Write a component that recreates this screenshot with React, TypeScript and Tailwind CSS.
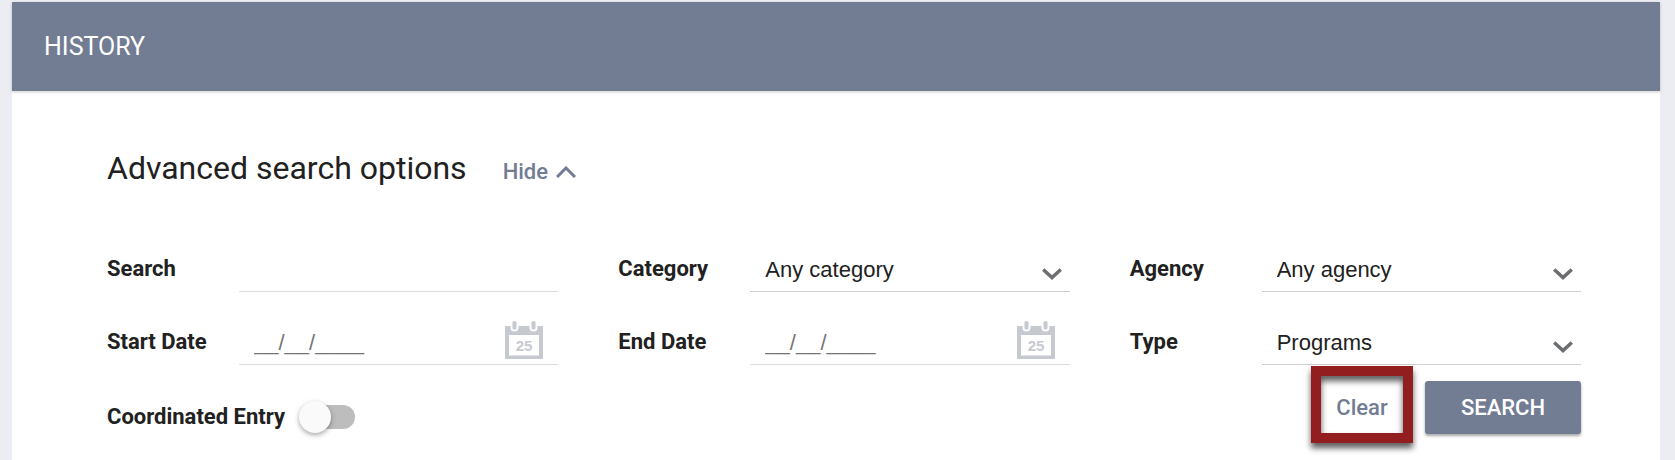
import { useState } from "react";
import type { ReactNode } from "react";

const ACCENT = "#727c93";

const inputClass =
  "h-11 w-full rounded-none border-b bg-transparent px-[15px] text-[22px] leading-7 text-[#212121] outline-none placeholder:text-[#757575] placeholder:opacity-100";

function Field({ id, label, children }: { id: string; label: string; children: ReactNode }) {
  return (
    <div className="flex">
      <label htmlFor={id} className="w-[132px] shrink-0 pt-[7px] font-[Roboto,sans-serif] text-[22px] leading-7 font-bold">
        {label}
      </label>
      <div className="relative min-w-0 flex-1">{children}</div>
    </div>
  );
}

function SelectField({ id, label, options }: { id: string; label: string; options: string[] }) {
  return (
    <Field id={id} label={label}>
      <select id={id} className={`${inputClass} appearance-none border-[#cfcfcf] pr-12`}>
        {options.map((option) => (
          <option key={option}>{option}</option>
        ))}
      </select>
      <svg className="pointer-events-none absolute top-5 right-2 h-3 w-5" viewBox="0 0 20 12" fill="none" stroke="#6c6e73" strokeWidth="3.4">
        <path d="M1.2 1.4 10 9.6 18.8 1.4" />
      </svg>
    </Field>
  );
}

function CalendarIcon() {
  return (
    <svg viewBox="0 0 38 38" className="h-[38px] w-[38px]" aria-hidden="true">
      <path fill="#c6c9d0" fillRule="evenodd" d="M0 5H38V38H0ZM4 14V34.5H34V14Z" />
      <rect x="5.5" y="-3" width="8" height="13.5" rx="4" fill="#fff" />
      <rect x="24.5" y="-3" width="8" height="13.5" rx="4" fill="#fff" />
      <rect x="7.5" y="0" width="4" height="8.5" rx="1.6" fill="#c6c9d0" />
      <rect x="26.5" y="0" width="4" height="8.5" rx="1.6" fill="#c6c9d0" />
      <text x="19" y="30" textAnchor="middle" fontSize="15" fontWeight="700" fontFamily="Liberation Sans, sans-serif" fill="#c6c9d0">
        25
      </text>
    </svg>
  );
}

function DateField({ id, label }: { id: string; label: string }) {
  return (
    <Field id={id} label={label}>
      <input id={id} type="text" placeholder="__/__/____" className={`${inputClass} border-[#dcdcdc] pr-16`} />
      <button type="button" aria-label={`Pick ${label.toLowerCase()}`} className="absolute top-0 right-[15px]">
        <CalendarIcon />
      </button>
    </Field>
  );
}

export default function App() {
  const [open, setOpen] = useState(true);
  const [coordinated, setCoordinated] = useState(false);

  return (
    <div className="flex min-h-screen flex-col bg-[#ecedf2] pt-0.5 pr-[15px] pl-3 font-['Liberation_Sans',Arial,sans-serif] text-[#212121]">
      <header className="z-10 bg-[#727c93] px-8 py-7 shadow-[0_1px_3px_rgba(0,0,0,0.2)]">
        <h1 className="font-[Roboto,sans-serif] text-[25px] leading-[33px] text-white">HISTORY</h1>
      </header>

      <main className="flex-1 bg-white pt-[57px] pr-[79px] pb-4 pl-[95px]">
        <div className="flex items-baseline gap-9 font-[Roboto,sans-serif]">
          <h2 className="text-[32px] leading-10">Advanced search options</h2>
          <button type="button" aria-expanded={open} onClick={() => setOpen(!open)} className="flex items-center gap-2 text-[22px] leading-7 font-medium text-[#727c93]">
            {open ? "Hide" : "Show"}
            <svg className={open ? "h-3 w-5" : "h-3 w-5 rotate-180"} viewBox="0 0 20 12" fill="none" stroke={ACCENT} strokeWidth="3">
              <path d="M1 11 10 2 19 11" />
            </svg>
          </button>
        </div>

        {open && (
          <form onSubmit={(event) => event.preventDefault()} onReset={() => setCoordinated(false)} className="mt-[60px]">
            <div className="grid grid-cols-3 gap-x-[60px] gap-y-[29px]">
              <Field id="search" label="Search">
                <input id="search" type="text" className={`${inputClass} border-[#dcdcdc]`} />
              </Field>
              <SelectField id="category" label="Category" options={["Any category"]} />
              <SelectField id="agency" label="Agency" options={["Any agency"]} />
              <DateField id="start-date" label="Start Date" />
              <DateField id="end-date" label="End Date" />
              <SelectField id="type" label="Type" options={["Programs", "Services"]} />
            </div>

            <div className="mt-4 flex items-start justify-between font-[Roboto,sans-serif]">
              <label className="flex items-center gap-3.5 pt-5 text-[22px] leading-8 font-bold">
                Coordinated Entry
                <input type="checkbox" role="switch" checked={coordinated} onChange={(event) => setCoordinated(event.target.checked)} className="peer sr-only" />
                <span className="flex h-6 w-14 items-center rounded-full bg-linear-to-r from-transparent from-25% to-[#bdbdbd] to-25% peer-checked:justify-end">
                  <span className="h-8 w-8 rounded-full bg-[#fafafa] shadow-[0_2px_5px_rgba(0,0,0,0.35)]" />
                </span>
              </label>
              <div className="flex gap-3">
                <div className="relative">
                  <button type="reset" className="h-[53px] w-[102px] text-[22px] leading-7 font-medium text-[#727c93]">
                    Clear
                  </button>
                  <span className="pointer-events-none absolute inset-x-0 -top-[15px] -bottom-[9px] border-10 border-[#931e20] drop-shadow-[0_5px_3px_rgba(0,0,0,0.65)]" />
                </div>
                <button type="submit" className="h-[53px] w-[156px] rounded-[3px] bg-[#727c93] text-[22px] leading-7 font-medium text-white shadow-[0_2px_3px_rgba(0,0,0,0.35)]">
                  SEARCH
                </button>
              </div>
            </div>
          </form>
        )}
      </main>
    </div>
  );
}
